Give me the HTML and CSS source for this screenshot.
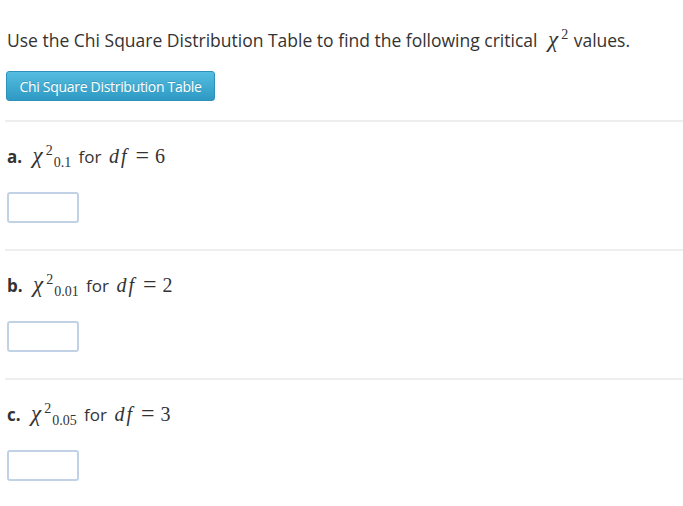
FILE: index.html
```html
<!DOCTYPE html>
<html>
<head>
<meta charset="utf-8">
<link rel="stylesheet" href="styles.css">
</head>
<body>
<div class="page">
  <p class="intro">Use the Chi Square Distribution Table to find the following critical <span class="math chi"><i>χ</i><sup>2</sup></span> values.</p>
  <div class="btn-row"><button class="btn">Chi Square Distribution Table</button></div>
  <div class="part">
    <div class="q"><b class="lbl">a.</b> <span class="math chi"><i>χ</i><sup>2</sup><sub>0.1</sub></span> for <span class="math"><i class="v">df</i><span class="eq">=</span>6</span></div>
    <div class="ans"><input class="box" type="text"></div>
  </div>
  <div class="part">
    <div class="q"><b class="lbl">b.</b> <span class="math chi"><i>χ</i><sup>2</sup><sub>0.01</sub></span> for <span class="math"><i class="v">df</i><span class="eq">=</span>2</span></div>
    <div class="ans"><input class="box" type="text"></div>
  </div>
  <div class="part">
    <div class="q"><b class="lbl">c.</b> <span class="math chi"><i>χ</i><sup>2</sup><sub>0.05</sub></span> for <span class="math"><i class="v">df</i><span class="eq">=</span>3</span></div>
    <div class="ans"><input class="box" type="text"></div>
  </div>
</div>
</body>
</html>
```
FILE: styles.css
```css
html, body { margin: 0; padding: 0; background: #fff; }
body { font-family: "Open Sans", "DejaVu Sans", sans-serif; color: #333; }
.page { padding: 0 0 0 5px; }
.intro { margin: 0; padding: 28px 0 0 2px; height: 22px; font-size: 17.5px; line-height: 22px; color: #333; }
.math { font-family: "Liberation Serif", "Times New Roman", serif; font-size: 20px; line-height: 1; }
.math i { font-style: italic; }
.chi i { font-size: 23px; }
.chi sup { font-size: 14px; vertical-align: 0; position: relative; top: -8px; margin-left: 3px; }
.chi sub { font-size: 14px; vertical-align: 0; position: relative; top: 4px; margin-left: 1px; }
.intro .chi { margin-left: 6px; margin-right: 1px; }
.btn-row { padding: 21px 0 19px 1px; }
.btn {
  display: block; height: 30px; width: 209px; padding: 0;
  border: 1px solid #2d92bb; border-radius: 3px;
  background: linear-gradient(#55bde0, #2e99c3);
  color: #fff; font-family: "Open Sans", sans-serif; font-size: 14px;
  letter-spacing: -0.3px; text-shadow: 0 -1px 0 rgba(0,0,0,0.15);
}
.part { border-top: 2px solid #eeeeee; padding: 21px 0 26px 2px; }
.q { font-size: 17px; line-height: 22px; height: 22px; color: #333; }
.q .chi { margin-left: 6px; margin-right: 3px; }
.v { letter-spacing: 2px; margin-left: 3px; }
.eq { font-size: 24px; margin: 0 6px 0 7px; }
.lbl { font-weight: bold; }
.ans { padding-top: 27px; }
.box {
  display: block; width: 72px; height: 31px; box-sizing: border-box;
  border: 2px solid #c2d2e6; border-radius: 3px; background: #fff; margin: 0;
}
```
